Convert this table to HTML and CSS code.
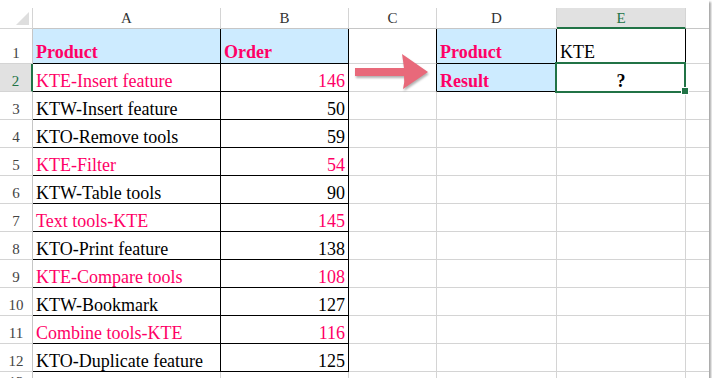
FILE: index.html
```html
<!DOCTYPE html>
<html>
<head>
<meta charset="utf-8">
<link rel="stylesheet" href="styles.css">
</head>
<body>
<div class="page">
  <div class="sheet">
    <div class="corner"><svg width="32" height="20" viewBox="0 0 32 20"><polygon points="29,4 29,17 16,17" fill="#dedede"/></svg></div>
    <div class="ch">A</div>
    <div class="ch">B</div>
    <div class="ch">C</div>
    <div class="ch">D</div>
    <div class="ch ch-sel">E</div>
    <div class="ch"></div>

    <div class="rh rh-first">1</div>
    <div class="c k blue pink bold first">Product</div>
    <div class="c k blue pink bold first">Order</div>
    <div class="c kr first"></div>
    <div class="c k blue pink bold first">Product</div>
    <div class="c k first">KTE</div>
    <div class="c first"></div>

    <div class="rh rh-sel">2</div>
    <div class="c k pink">KTE-Insert feature</div>
    <div class="c k pink r">146</div>
    <div class="c kr"></div>
    <div class="c k blue pink bold">Result</div>
    <div class="c k bold ctr">?</div>
    <div class="c"></div>

    <div class="rh">3</div>
    <div class="c k">KTW-Insert feature</div>
    <div class="c k r">50</div>
    <div class="c"></div><div class="c"></div><div class="c"></div><div class="c"></div>

    <div class="rh">4</div>
    <div class="c k">KTO-Remove tools</div>
    <div class="c k r">59</div>
    <div class="c"></div><div class="c"></div><div class="c"></div><div class="c"></div>

    <div class="rh">5</div>
    <div class="c k pink">KTE-Filter</div>
    <div class="c k pink r">54</div>
    <div class="c"></div><div class="c"></div><div class="c"></div><div class="c"></div>

    <div class="rh">6</div>
    <div class="c k">KTW-Table tools</div>
    <div class="c k r">90</div>
    <div class="c"></div><div class="c"></div><div class="c"></div><div class="c"></div>

    <div class="rh">7</div>
    <div class="c k pink">Text tools-KTE</div>
    <div class="c k pink r">145</div>
    <div class="c"></div><div class="c"></div><div class="c"></div><div class="c"></div>

    <div class="rh">8</div>
    <div class="c k">KTO-Print feature</div>
    <div class="c k r">138</div>
    <div class="c"></div><div class="c"></div><div class="c"></div><div class="c"></div>

    <div class="rh">9</div>
    <div class="c k pink">KTE-Compare tools</div>
    <div class="c k pink r">108</div>
    <div class="c"></div><div class="c"></div><div class="c"></div><div class="c"></div>

    <div class="rh">10</div>
    <div class="c k">KTW-Bookmark</div>
    <div class="c k r">127</div>
    <div class="c"></div><div class="c"></div><div class="c"></div><div class="c"></div>

    <div class="rh">11</div>
    <div class="c k pink">Combine tools-KTE</div>
    <div class="c k pink r">116</div>
    <div class="c"></div><div class="c"></div><div class="c"></div><div class="c"></div>

    <div class="rh">12</div>
    <div class="c k">KTO-Duplicate feature</div>
    <div class="c k r">125</div>
    <div class="c"></div><div class="c"></div><div class="c"></div><div class="c"></div>

    <div class="rh rh-last">13</div>
    <div class="c"></div><div class="c"></div><div class="c"></div><div class="c"></div><div class="c"></div><div class="c"></div>
  </div>

  <svg class="arrow" width="85" height="45" viewBox="0 0 85 45">
    <path d="M5,18 L54,18 Q53,10 52,4 L78,22 L53,39 Q55,32 54,26 L5,26 Z" fill="#e8697a"/>
  </svg>
  <div class="selbox"></div>
  <div class="handle"></div>
</div>
</body>
</html>
```

FILE: styles.css
```css
html, body {
  margin: 0;
  padding: 0;
  background: #ffffff;
}

.page {
  position: relative;
  width: 709px;
  height: 378px;
  overflow: hidden;
  background: #ffffff;
  box-shadow: 2px 2px 2px rgba(0, 0, 0, 0.35);
  padding-top: 8px;
  box-sizing: border-box;
  font-family: "Liberation Serif", "Times New Roman", serif;
}

.sheet {
  display: grid;
  grid-template-columns: 33px 188px 128px 88px 120px 129px 24px;
  grid-template-rows: 21px 35px repeat(11, 28px) 28px;
}

.sheet > div {
  box-sizing: border-box;
  border-right: 1px solid #d4d4d4;
  border-bottom: 1px solid #d4d4d4;
}

.corner {
  background: #ffffff;
}
.corner svg {
  display: block;
}

.ch {
  display: flex;
  align-items: center;
  justify-content: center;
  font-size: 15px;
  line-height: 20px;
  color: #333333;
  background: #ffffff;
  border-bottom-color: #c6c6c6 !important;
}

.ch-sel {
  background: #e1e1e1;
  color: #217346;
  border-bottom: 2px solid #217346 !important;
}

.rh {
  display: flex;
  align-items: flex-end;
  justify-content: center;
  font-size: 15px;
  line-height: 18px;
  color: #444444;
  padding-bottom: 1px;
  border-right-color: #c6c6c6 !important;
}

.rh-sel {
  background: #e1e1e1;
  color: #217346;
  border-right: 2px solid #217346 !important;
}

.rh-last {
  align-items: flex-start;
  padding-top: 1px;
}

.c {
  display: flex;
  align-items: flex-end;
  padding: 0 3px;
  font-size: 18px;
  line-height: 20px;
  color: #000000;
  white-space: nowrap;
  overflow: hidden;
}

.first {
  padding-bottom: 1px;
}

.k {
  border-right-color: #000000 !important;
  border-bottom-color: #000000 !important;
}

.kr {
  border-right-color: #000000 !important;
}

.blue {
  background: #cdebff;
}

.pink {
  color: #ff0066;
}

.bold {
  font-weight: bold;
}

.r {
  justify-content: flex-end;
}

.ctr {
  justify-content: center;
}

.arrow {
  position: absolute;
  left: 350px;
  top: 50px;
  filter: drop-shadow(1px 2px 1px rgba(0, 0, 0, 0.3));
}

.selbox {
  position: absolute;
  left: 555px;
  top: 62px;
  width: 131px;
  height: 31px;
  box-sizing: border-box;
  border: 2px solid #217346;
}

.handle {
  position: absolute;
  left: 682px;
  top: 88px;
  width: 6px;
  height: 6px;
  background: #217346;
  box-shadow: 0 0 0 1px #ffffff;
}
```
